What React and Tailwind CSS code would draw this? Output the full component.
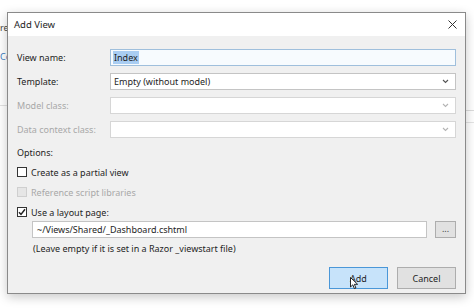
import React from "react";

function Chevron({ disabled }) {
  return (
    <svg width="7" height="5" viewBox="0 0 7 5" className="shrink-0">
      <path d="M1 1 L3.5 3.5 L6 1" fill="none" stroke={disabled ? "#b4b4b4" : "#555"} strokeWidth="1.1" />
    </svg>
  );
}

function Select({ value, disabled }) {
  return (
    <div className={"flex-1 h-[17px] flex items-center justify-between pl-[3px] pr-[6px] bg-white border " + (disabled ? "border-[#d6d6d6]" : "border-[#c4c4c4]")}>
      <span className="text-[#1e1e1e]">{value}</span>
      <Chevron disabled={disabled} />
    </div>
  );
}

function Row({ label, disabled, children }) {
  return (
    <div className="flex items-center h-[17px]">
      <span className={"w-[93px] shrink-0 " + (disabled ? "text-[#a8a8a8]" : "text-[#1e1e1e]")}>{label}</span>
      {children}
    </div>
  );
}

function Check({ checked, disabled, label }) {
  return (
    <div className="flex items-center h-[14px] gap-[4px]">
      <div className={"w-[10px] h-[10px] border flex items-center justify-center " + (disabled ? "border-[#cfcfcf] bg-[#e6e6e6]" : "border-[#333] bg-white")}>
        {checked && (
          <svg width="8" height="8" viewBox="0 0 8 8">
            <path d="M1 4.2 L3 6.4 L7 1.2" fill="none" stroke="#222" strokeWidth="1.5" />
          </svg>
        )}
      </div>
      <span className={disabled ? "text-[#a8a8a8]" : "text-[#1e1e1e]"}>{label}</span>
    </div>
  );
}

export default function App() {
  return (
    <div className="w-[474px] h-[308px] bg-white relative overflow-hidden text-[9px] leading-none" style={{ fontFamily: '"Noto Sans", sans-serif' }}>
      {/* bits of the page behind the dialog */}
      <span className="absolute left-0 top-[23px] text-[9px] text-[#444]">re</span>
      <span className="absolute left-0 top-[52px] text-[9px] text-[#3a7bbf]">Co</span>
      <div className="absolute left-0 top-[105px] w-[7px] h-px bg-[#e2e2e2]" />
      <div className="absolute left-[466px] top-[110px] w-[8px] h-px bg-[#dcdcdc]" />
      <div className="absolute left-[466px] top-[122px] w-[8px] h-px bg-[#e4e4e4]" />

      <div className="ml-[7px] mt-[12px] w-[459px] h-[282px] border border-[#8a8a8a] bg-[#f0f0f0] flex flex-col shadow-[0_3px_10px_rgba(0,0,0,0.22)] relative z-10">
        <div className="h-[23px] bg-white flex items-center justify-between pl-[6px] pr-[8px]">
          <span className="text-[#1e1e1e] text-[9.5px]">Add View</span>
          <svg width="9" height="9" viewBox="0 0 9 9">
            <path d="M0.5 0.5 L8.5 8.5 M8.5 0.5 L0.5 8.5" stroke="#333" strokeWidth="1" />
          </svg>
        </div>

        <div className="flex-1 flex flex-col pl-[9px] pr-[9px] pt-[13px]">
          <div className="flex flex-col gap-[7px]">
            <Row label="View name:">
              <div className="flex-1 h-[17px] flex items-center pl-[2px] bg-[#f7fbfe] border border-[#9fbfdc]">
                <span className="bg-[#a9cdf2] text-[#1e1e1e] px-[1px] py-[2px]">Index</span>
              </div>
            </Row>
            <Row label="Template:">
              <Select value="Empty (without model)" />
            </Row>
            <Row label="Model class:" disabled>
              <Select value="" disabled />
            </Row>
            <Row label="Data context class:" disabled>
              <Select value="" disabled />
            </Row>
          </div>

          <div className="mt-[7px] h-[14px] flex items-center text-[#1e1e1e]">Options:</div>
          <div className="mt-[6px] flex flex-col gap-[6px]">
            <Check label="Create as a partial view" />
            <Check label="Reference script libraries" disabled />
            <Check label="Use a layout page:" checked />
          </div>

          <div className="ml-[15px] mt-[2px] flex items-center gap-[8px]">
            <div className="flex-1 h-[17px] flex items-center pl-[4px] bg-white border border-[#c4c4c4] text-[#1e1e1e]">
              ~/Views/Shared/_Dashboard.cshtml
            </div>
            <div className="w-[21px] h-[17px] bg-[#e1e1e1] border border-[#adadad] flex items-center justify-center text-[#444] pb-[3px]">...</div>
          </div>
          <div className="ml-[16px] mt-[6px] text-[#1e1e1e]">(Leave empty if it is set in a Razor _viewstart file)</div>

          <div className="mt-auto mb-[4px] flex justify-end gap-[9px]">
            <div className="w-[59px] h-[22px] bg-[#c7e3fa] border border-[#4a97d8] flex items-center justify-center text-[#1e1e1e] relative">
              Add
              <svg width="9" height="13" viewBox="0 0 9 13" className="absolute left-[20px] top-[9px]">
                <path d="M0.5 0.5 L0.5 10 L2.8 7.8 L4.4 11.6 L5.9 11 L4.4 7.3 L7.6 7.3 Z" fill="#fff" stroke="#111" strokeWidth="0.9" strokeLinejoin="round" />
              </svg>
            </div>
            <div className="w-[59px] h-[22px] bg-[#e1e1e1] border border-[#adadad] flex items-center justify-center text-[#1e1e1e]">Cancel</div>
          </div>
        </div>
      </div>
    </div>
  );
}
